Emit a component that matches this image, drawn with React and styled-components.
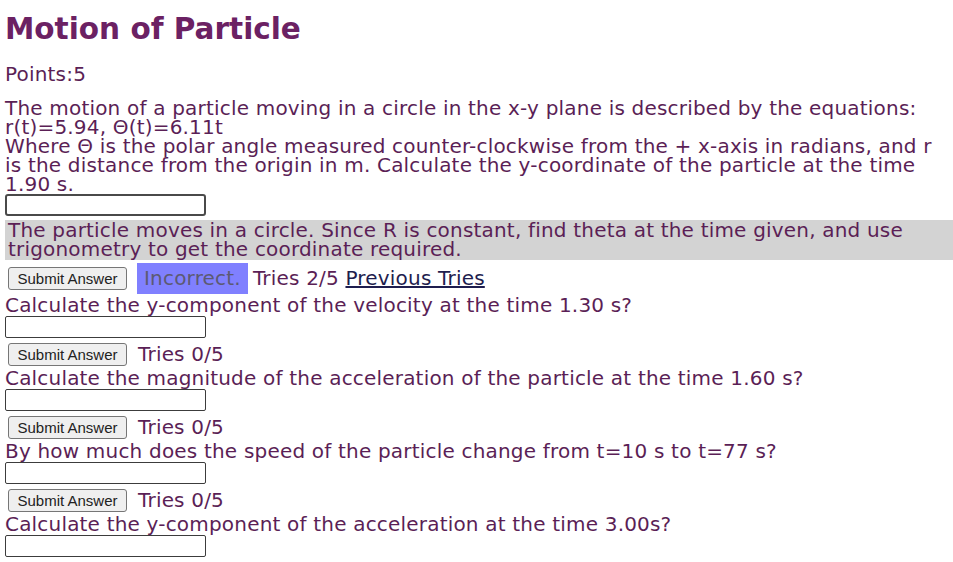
import React from 'react';
import styled, { createGlobalStyle } from 'styled-components';

const GlobalStyle = createGlobalStyle`
  body {
    margin: 0;
    background: #ffffff;
    font-family: 'DejaVu Sans', Verdana, sans-serif;
    color: #5b1f56;
    overflow: hidden;
  }
`;

const Page = styled.div`
  padding: 12px 0 0 5px;
  font-size: 20px;
  line-height: 19px;
  letter-spacing: 0.19px;
`;

const Title = styled.h1`
  margin: 0;
  font-size: 29.5px;
  line-height: 35px;
  font-weight: bold;
  letter-spacing: 0;
  color: #6b2163;
`;

const Points = styled.div`
  margin-top: 18px;
`;

const Problem = styled.div`
  margin-top: 15px;
  max-width: 945px;
`;

const AnswerInput = styled.input`
  display: block;
  box-sizing: border-box;
  width: 201px;
  height: 22px;
  margin: ${(p) => (p.$first ? '0' : '1px')} 0 0 0;
  padding: 0 3px;
  border: ${(p) => (p.$focused ? '2px solid #4a4a4a' : '1px solid #3c3c3c')};
  border-radius: ${(p) => (p.$focused ? '3px' : '2px')};
  background: #fff;
  font-family: 'DejaVu Sans', sans-serif;
  font-size: 14px;
  outline: none;
  caret-color: #222;
`;

const Hint = styled.div`
  margin-top: 4px;
  padding: 1px 3px;
  background: #d3d3d3;
`;

const SubmitRow = styled.div`
  display: flex;
  align-items: center;
  height: ${(p) => p.$height || 23}px;
  margin-top: ${(p) => p.$top ?? 5}px;
  margin-bottom: ${(p) => p.$bottom ?? 3}px;
  white-space: pre;
`;

const SubmitButton = styled.button`
  box-sizing: border-box;
  width: 119px;
  height: 23px;
  margin: 0 11px 0 3px;
  padding: 0;
  border: 1px solid #767676;
  border-radius: 3px;
  background: #efefef;
  color: #222;
  font-family: 'Liberation Sans', Arial, sans-serif;
  font-size: 15px;
  letter-spacing: 0;
`;

const Verdict = styled.span`
  display: inline-block;
  padding: 6px 7px;
  margin-left: -1px;
  background: #8080ff;
  color: #5c5a72;
`;

const Tries = styled.span`
  margin-left: ${(p) => (p.$after ? '5px' : '0')};
`;

const PrevLink = styled.a`
  color: #1e1d4e;
  text-decoration: underline;
  cursor: pointer;
`;

const Question = styled.div``;

const questions = [
  'Calculate the y-component of the velocity at the time 1.30 s?',
  'Calculate the magnitude of the acceleration of the particle at the time 1.60 s?',
  'By how much does the speed of the particle change from t=10 s to t=77 s?',
  'Calculate the y-component of the acceleration at the time 3.00s?',
];

export default function App() {
  return (
    <>
      <GlobalStyle />
      <Page>
        <Title>Motion of Particle</Title>
        <Points>Points:5</Points>
        <Problem>
          The motion of a particle moving in a circle in the x-y plane is described by the equations:
          <br />
          r(t)=5.94, Θ(t)=6.11t
          <br />
          Where Θ is the polar angle measured counter-clockwise from the + x-axis in radians, and r is the
          distance from the origin in m. Calculate the y-coordinate of the particle at the time 1.90 s.
        </Problem>
        <AnswerInput $first $focused autoFocus />
        <Hint>
          The particle moves in a circle. Since R is constant, find theta at the time given, and use
          trigonometry to get the coordinate required.
        </Hint>
        <SubmitRow $height={31} $top={3} $bottom={2}>
          <SubmitButton>Submit Answer</SubmitButton>
          <Verdict>Incorrect.</Verdict>
          <Tries $after>Tries 2/5 </Tries>
          <PrevLink>Previous Tries</PrevLink>
        </SubmitRow>
        {questions.map((q) => (
          <div key={q}>
            <Question>{q}</Question>
            <AnswerInput />
            <SubmitRow>
              <SubmitButton>Submit Answer</SubmitButton>
              <Tries>Tries 0/5</Tries>
            </SubmitRow>
          </div>
        ))}
      </Page>
    </>
  );
}
